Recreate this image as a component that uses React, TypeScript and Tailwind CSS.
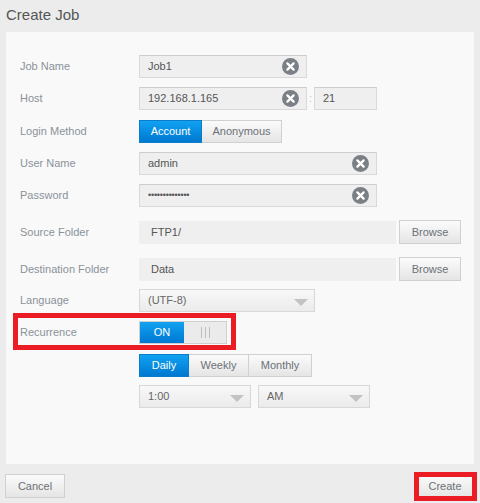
import React from 'react';

const font = { fontFamily: '"Liberation Sans", Arial, sans-serif' };

const ClearIcon = () => (
  <svg width="17" height="17" viewBox="0 0 17 17" className="flex-shrink-0">
    <circle cx="8.5" cy="8.5" r="8.5" fill="#7b8086" />
    <path d="M5.4 5.4 L11.6 11.6 M11.6 5.4 L5.4 11.6" stroke="#fff" strokeWidth="2.3" strokeLinecap="round" />
  </svg>
);

const Arrow = () => (
  <svg width="14" height="7" viewBox="0 0 14 7" className="flex-shrink-0">
    <path d="M0 0 L14 0 L7 7 Z" fill="#c2c2c2" />
  </svg>
);

const Label: React.FC<{ text: string }> = ({ text }) => (
  <div className="w-[119px] flex-shrink-0 text-[11px] text-[#8a9299] leading-none">{text}</div>
);

const TextBox: React.FC<{ value: string; width: string; clear?: boolean; dots?: boolean }> = ({ value, width, clear, dots }) => (
  <div className={`${width} h-[23px] flex items-center justify-between bg-[#efefef] border border-[#d9d9d9] border-t-[#cdcdcd] pl-[8px] pr-[7px]`}>
    <span className={`${dots ? 'text-[9px] tracking-[-0.2px]' : 'text-[11px]'} text-[#555] leading-none`}>{value}</span>
    {clear && <ClearIcon />}
  </div>
);

const Btn: React.FC<{ label: string; active?: boolean; className?: string }> = ({ label, active, className = '' }) => (
  <div
    className={`h-[23px] flex items-center justify-center text-[11px] leading-none border ${
      active
        ? 'bg-linear-to-b from-[#12a2f2] to-[#0078d0] border-[#0a7ccc] text-white'
        : 'bg-linear-to-b from-[#fbfbfb] to-[#e5e5e5] border-[#d0d0d0] text-[#6b7177]'
    } ${className}`}
  >
    {label}
  </div>
);

const Select: React.FC<{ value: string; width: string }> = ({ value, width }) => (
  <div className={`${width} h-[23px] flex items-center justify-between bg-linear-to-b from-[#f8f8f8] to-[#ebebeb] border border-[#d8d8d8] pl-[8px] pr-[6px]`}>
    <span className="text-[11px] text-[#666] leading-none">{value}</span>
    <div className="pt-[3px]"><Arrow /></div>
  </div>
);

export default function App() {
  return (
    <div style={font} className="relative w-[480px] h-[503px] bg-[#ececec] overflow-hidden">
      {/* title */}
      <div className="h-[32px] pl-[6px] pt-[5px] text-[15px] leading-[20px] text-[#555]">Create Job</div>

      {/* form panel */}
      <div className="ml-[6px] w-[468px] h-[432px] bg-[#f9f9f9] pt-[23px] pl-[14px]">
        <div className="flex items-center">
          <Label text="Job Name" />
          <TextBox value="Job1" width="w-[168px]" clear />
        </div>

        <div className="flex items-center mt-[9px]">
          <Label text="Host" />
          <TextBox value="192.168.1.165" width="w-[168px]" clear />
          <span className="w-[7px] text-center text-[11px] text-[#c4c4c4] leading-none">:</span>
          <TextBox value="21" width="w-[63px]" />
        </div>

        <div className="flex items-center mt-[10px]">
          <Label text="Login Method" />
          <Btn label="Account" active className="w-[63px]" />
          <Btn label="Anonymous" className="w-[80px] border-l-0" />
        </div>

        <div className="flex items-center mt-[9px]">
          <Label text="User Name" />
          <TextBox value="admin" width="w-[238px]" clear />
        </div>

        <div className="flex items-center mt-[9px]">
          <Label text="Password" />
          <TextBox value="••••••••••••••" width="w-[238px]" clear dots />
        </div>

        <div className="flex items-center mt-[13px]">
          <Label text="Source Folder" />
          <div className="w-[257px] h-[23px] flex items-center bg-[#efefef] pl-[12px] text-[11px] text-[#555] leading-none">FTP1/</div>
          <Btn label="Browse" className="w-[62px] ml-[3px] h-[24px]" />
        </div>

        <div className="flex items-center mt-[13px]">
          <Label text="Destination Folder" />
          <div className="w-[257px] h-[23px] flex items-center bg-[#efefef] pl-[12px] text-[11px] text-[#555] leading-none">Data</div>
          <Btn label="Browse" className="w-[62px] ml-[3px] h-[24px]" />
        </div>

        <div className="flex items-center mt-[8px]">
          <Label text="Language" />
          <Select value="(UTF-8)" width="w-[176px]" />
        </div>

        <div className="flex items-center mt-[9px]">
          <Label text="Recurrence" />
          <div className="w-[88px] h-[23px] flex border border-[#cfcfcf]">
            <div className="w-[44px] flex items-center justify-center bg-linear-to-b from-[#12a2f2] to-[#0078d0] text-[11px] text-white leading-none">ON</div>
            <div className="flex-1 flex items-center justify-center gap-[3px] bg-[#ebebeb]">
              <div className="w-px h-[11px] bg-[#bdbdbd]" />
              <div className="w-px h-[11px] bg-[#bdbdbd]" />
              <div className="w-px h-[11px] bg-[#bdbdbd]" />
            </div>
          </div>
        </div>

        <div className="flex items-center mt-[10px] pl-[119px]">
          <Btn label="Daily" active className="w-[50px]" />
          <Btn label="Weekly" className="w-[60px] border-l-0" />
          <Btn label="Monthly" className="w-[63px] border-l-0" />
        </div>

        <div className="flex items-center mt-[8px] pl-[119px] gap-[7px]">
          <Select value="1:00" width="w-[112px]" />
          <Select value="AM" width="w-[112px]" />
        </div>
      </div>

      {/* footer */}
      <div className="flex justify-between mt-[10px] pl-[5px] pr-[6px]">
        <Btn label="Cancel" className="w-[60px] h-[24px]" />
        <Btn label="Create" className="w-[58px] h-[24px]" />
      </div>

      {/* highlight overlays */}
      <div className="absolute left-[13px] top-[313px] w-[223px] h-[37px] border-[5px] border-[#ec1c24]" />
      <div className="absolute left-[414px] top-[472px] w-[63px] h-[29px] border-[5px] border-[#ec1c24]" />
    </div>
  );
}
